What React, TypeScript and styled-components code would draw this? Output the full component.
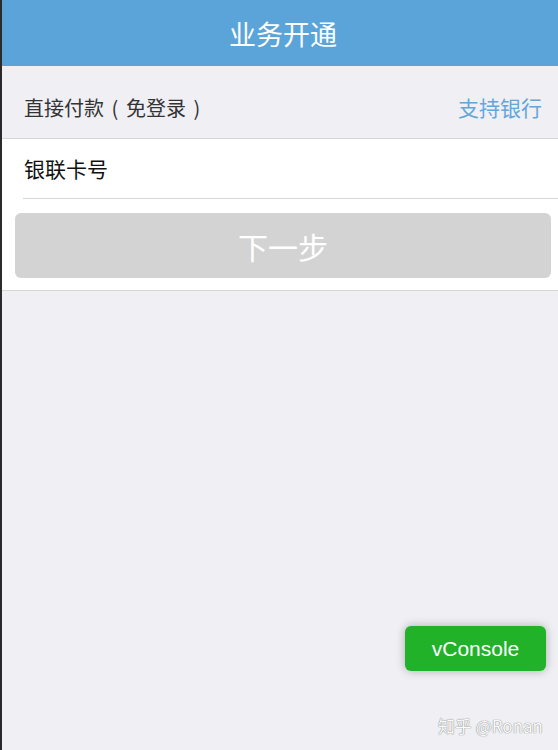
import React from 'react';
import styled, { createGlobalStyle } from 'styled-components';

const GlobalStyle = createGlobalStyle`
    html, body {
        margin: 0;
        padding: 0;
        background: #efeff4;
        overflow: hidden;
    }
    body {
        font-family: "Noto Sans CJK SC", "Noto Sans", sans-serif;
    }
`;

const Viewport = styled.div`
    position: relative;
    width: 558px;
    height: 750px;
    overflow: hidden;
    background: #efeff4;
`;

const Frame = styled.div`
    width: 562px;
    height: 750px;
    border-left: 2px solid #2a2a2e;
    display: flex;
    flex-direction: column;
    background: #efeff4;
`;

const Header = styled.header`
    height: 66px;
    background: #5ba4d9;
    color: #fff;
    display: flex;
    align-items: center;
    justify-content: center;
    font-size: 27px;
    padding-top: 1px;
    box-sizing: border-box;
`;

const PayBar = styled.div`
    height: 73px;
    box-sizing: border-box;
    padding: 10px 22px 0 22px;
    display: flex;
    align-items: center;
    justify-content: space-between;
    border-bottom: 1px solid #d6d6d8;
    font-size: 20px;
`;

const PayTitle = styled.span`
    color: #333;
`;

const Paren = styled.span`
    display: inline-block;
    width: 22px;
    text-align: center;
`;

const BankLink = styled.span`
    color: #64a6d8;
    font-size: 21px;
`;

const FormCard = styled.div`
    background: #fff;
    border-bottom: 1px solid #d6d6d8;
    padding-bottom: 12px;
`;

const FieldRow = styled.div`
    margin-left: 21px;
    height: 60px;
    box-sizing: border-box;
    padding: 0 0 2px 1px;
    display: flex;
    align-items: center;
    border-bottom: 1px solid #d6d6d8;
    font-size: 21px;
    color: #111;
`;

const NextButton = styled.button`
    display: block;
    margin: 14px 13px 0 13px;
    width: calc(100% - 26px);
    height: 65px;
    border: none;
    border-radius: 6px;
    background: #d3d3d3;
    color: #fff;
    font-family: inherit;
    font-size: 30px;
    padding: 0;
`;

const ConsoleButton = styled.div`
    position: absolute;
    left: 405px;
    top: 626px;
    width: 141px;
    height: 45px;
    border-radius: 6px;
    background: #21b22a;
    color: #fff;
    display: flex;
    align-items: center;
    justify-content: center;
    font-family: "Liberation Sans", Arial, sans-serif;
    font-size: 21px;
    box-shadow: 0 0 10px rgba(0, 0, 0, 0.28);
`;

const Watermark = styled.div`
    position: absolute;
    right: 15px;
    top: 713px;
    color: #fafafa;
    font-size: 17px;
    font-family: "Noto Sans CJK SC", "Liberation Sans", sans-serif;
    text-shadow: 0 0 1px #8a8a8a, 0 0 1px #8a8a8a;
`;

export default function App() {
    return (
        <>
            <GlobalStyle />
            <Viewport>
                <Frame>
                    <Header>业务开通</Header>
                    <PayBar>
                        <PayTitle>
                            直接付款<Paren>(</Paren>免登录<Paren>)</Paren>
                        </PayTitle>
                        <BankLink>支持银行</BankLink>
                    </PayBar>
                    <FormCard>
                        <FieldRow>银联卡号</FieldRow>
                        <NextButton>下一步</NextButton>
                    </FormCard>
                </Frame>
                <ConsoleButton>vConsole</ConsoleButton>
                <Watermark>知乎 @Ronan</Watermark>
            </Viewport>
        </>
    );
}
